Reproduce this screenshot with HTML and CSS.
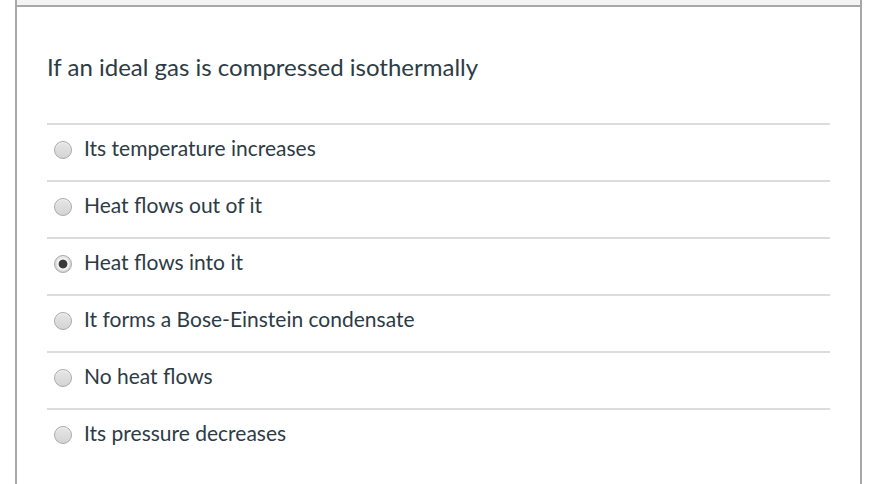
FILE: index.html
```html
<!DOCTYPE html>
<html>
<head>
<meta charset="utf-8">
<link rel="stylesheet" href="styles.css">
</head>
<body>
<div class="frame">
  <div class="strip"></div>
  <div class="content">
    <div class="question">If an ideal gas is compressed isothermally</div>
    <div class="answers">
      <label class="answer"><span class="radio"></span><span class="label">Its temperature increases</span></label>
      <label class="answer"><span class="radio"></span><span class="label">Heat flows out of it</span></label>
      <label class="answer"><span class="radio checked"></span><span class="label">Heat flows into it</span></label>
      <label class="answer"><span class="radio"></span><span class="label">It forms a Bose-Einstein condensate</span></label>
      <label class="answer"><span class="radio"></span><span class="label">No heat flows</span></label>
      <label class="answer"><span class="radio"></span><span class="label">Its pressure decreases</span></label>
    </div>
  </div>
</div>
</body>
</html>
```
FILE: styles.css
```css
html, body {
  margin: 0;
  padding: 0;
  background: #ffffff;
}
body {
  font-family: Lato, "Open Sans", sans-serif;
  color: #2d3b45;
  height: 484px;
  overflow: hidden;
}
.frame {
  margin-left: 15px;
  width: 843px;
  height: 484px;
  border-left: 2px solid #a8a8a8;
  border-right: 2px solid #a8a8a8;
}
.strip {
  height: 5px;
  background: #f4f4f4;
  border-bottom: 2px solid #a8a8a8;
}
.content {
  padding: 0 30px;
}
.question {
  font-size: 24px;
  line-height: 29px;
  padding-top: 45px;
  padding-bottom: 42px;
}
.answer {
  display: flex;
  align-items: center;
  border-top: 2px solid #dcdcdc;
  padding: 12px 0 21px 7px;
}
.label {
  font-size: 21px;
  line-height: 22px;
  margin-left: 12px;
}
.radio {
  box-sizing: border-box;
  width: 18px;
  height: 18px;
  border-radius: 50%;
  border: 1px solid #a9a9a9;
  background: linear-gradient(#e6e6e6, #d4d4d4);
  box-shadow: inset 0 1px 1px rgba(255,255,255,0.6);
  margin-top: 3px;
}
.radio.checked {
  background: radial-gradient(circle, #3a3a3a 0, #3a3a3a 4px, #f2f2f2 4.8px, #f2f2f2 6px, #d6d6d6 7px);
}
```
